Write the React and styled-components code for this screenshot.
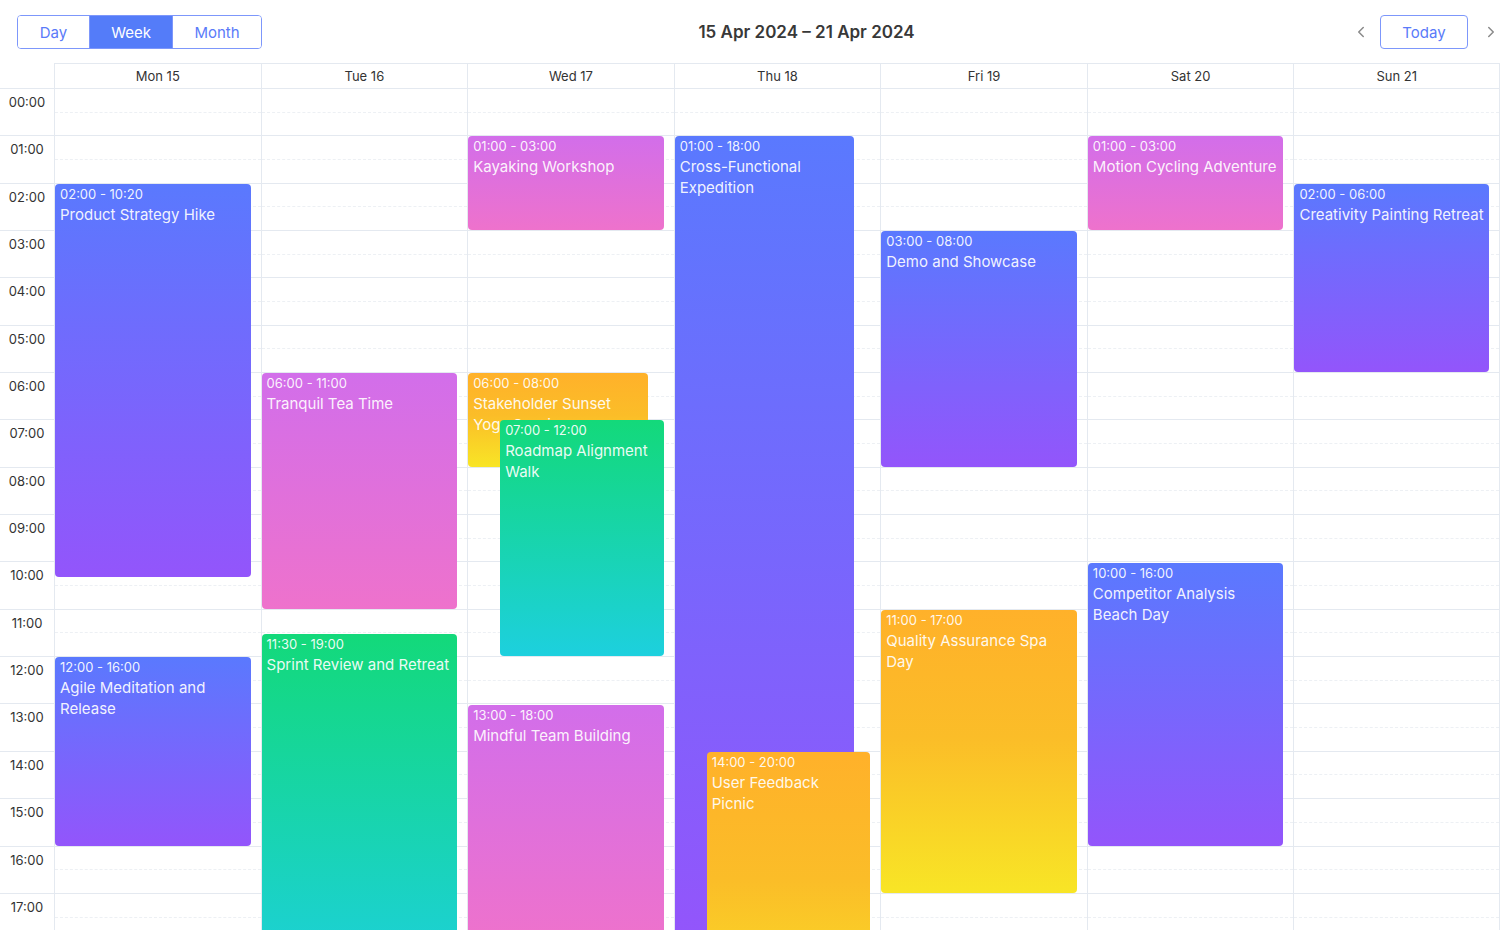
import React from 'react';
import styled, { createGlobalStyle } from 'styled-components';
import { ChevronLeft, ChevronRight } from 'lucide-react';

const HOUR = 47.35;

const GlobalStyle = createGlobalStyle`
  body {
    margin: 0;
    overflow: hidden;
    background: #fff;
    font-family: Inter, "Noto Sans", sans-serif;
    color: #333;
  }
`;

const Page = styled.div`
  width: 1512px;
  height: 930px;
  display: flex;
  flex-direction: column;
  overflow: hidden;
`;

const Toolbar = styled.div`
  height: 63px;
  box-sizing: border-box;
  padding: 15px 11px 0 17px;
  display: flex;
  align-items: flex-start;
`;

const ViewGroup = styled.div`
  display: flex;
  border: 1px solid #7d97fb;
  border-radius: 4px;
  overflow: hidden;
  height: 34px;
  box-sizing: border-box;
`;

const ViewButton = styled.button`
  border: none;
  border-left: ${p => (p.first ? 'none' : '1px solid #7d97fb')};
  background: ${p => (p.active ? '#547cf9' : '#fff')};
  color: ${p => (p.active ? '#fff' : '#5a7bf9')};
  font-family: inherit;
  font-size: 15px;
  width: ${p => p.w}px;
  padding: 0;
  cursor: pointer;
`;

const Title = styled.h2`
  flex: 1;
  margin: 0;
  line-height: 34px;
  text-align: center;
  font-size: 17px;
  font-weight: 600;
  color: #383838;
`;

const NavGroup = styled.div`
  display: flex;
  align-items: center;
  height: 34px;
`;

const IconButton = styled.button`
  border: none;
  background: none;
  padding: 0;
  width: 20px;
  display: flex;
  align-items: center;
  justify-content: center;
  color: #8a8a8a;
`;

const TodayButton = styled.button`
  height: 34px;
  width: 88px;
  box-sizing: border-box;
  border: 1px solid #7d97fb;
  border-radius: 4px;
  background: #fff;
  color: #5a7bf9;
  font-family: inherit;
  font-size: 15px;
  margin: 0 13px 0 9px;
`;

const Columns = styled.div`
  display: grid;
  grid-template-columns: 54px repeat(7, 1fr);
  width: 1500px;
`;

const HeaderRow = styled(Columns)`
  height: 26px;
  box-sizing: border-box;
  border-bottom: 1px solid #e4e9f0;
`;

const HeaderCell = styled.div`
  border-left: ${p => (p.gutter ? 'none' : '1px solid #e4e9f0')};
  border-top: ${p => (p.gutter ? 'none' : '1px solid #e4e9f0')};
  border-right: ${p => (p.last ? '1px solid #e4e9f0' : 'none')};
  font-size: 13px;
  color: #333;
  display: flex;
  align-items: center;
  justify-content: center;
`;

const Body = styled(Columns)`
  flex: 1;
  overflow: hidden;
  align-items: start;
`;

const Gutter = styled.div`
  display: flex;
  flex-direction: column;
`;

const TimeLabel = styled.div`
  height: ${HOUR}px;
  box-sizing: border-box;
  border-bottom: 1px solid #e4e9f0;
  font-size: 13px;
  color: #333;
  text-align: center;
  padding-top: 5px;
  flex-shrink: 0;
`;

const DayColumn = styled.div`
  position: relative;
  display: flex;
  flex-direction: column;
  border-left: 1px solid #e4e9f0;
  border-right: ${p => (p.last ? '1px solid #e4e9f0' : 'none')};
`;

const Slot = styled.div`
  height: ${HOUR}px;
  box-sizing: border-box;
  border-bottom: 1px solid #e4e9f0;
  flex-shrink: 0;
  display: flex;
  flex-direction: column;
  justify-content: center;
`;

const HalfLine = styled.div`
  border-top: 1px dashed #edf0f4;
`;

const gradients = {
  blue: 'linear-gradient(180deg, #5a79fe 0%, #9355fb 100%)',
  pink: 'linear-gradient(180deg, #d26eea 0%, #ee72cc 100%)',
  orange: 'linear-gradient(180deg, #ffb12a 0%, #fbbd28 45%, #f8e526 100%)',
  green: 'linear-gradient(180deg, #13d97a 0%, #1dd0de 100%)',
};

const Event = styled.div`
  position: absolute;
  left: ${p => (p.shift ? 32 : 0)}px;
  right: ${p => (p.narrow ? 26 : 10)}px;
  box-sizing: border-box;
  border-radius: 4px;
  background: ${p => gradients[p.tone]};
  color: rgba(255, 255, 255, 0.93);
  padding: 2px ${p => (p.shift ? 8 : 2)}px 3px 5px;
  overflow: hidden;
`;

const EventTime = styled.div`
  font-size: 13px;
  line-height: 17px;
`;

const EventTitle = styled.div`
  font-size: 15px;
  line-height: 21px;
  margin-top: 1px;
`;

const hours = Array.from({ length: 24 }, (_, i) => `${String(i).padStart(2, '0')}:00`);

const days = [
  {
    label: 'Mon 15',
    events: [
      { s: 2, e: 10 + 20 / 60, time: '02:00 - 10:20', title: 'Product Strategy Hike', tone: 'blue' },
      { s: 12, e: 16, time: '12:00 - 16:00', title: 'Agile Meditation and Release', tone: 'blue' },
    ],
  },
  {
    label: 'Tue 16',
    events: [
      { s: 6, e: 11, time: '06:00 - 11:00', title: 'Tranquil Tea Time', tone: 'pink' },
      { s: 11.5, e: 19, time: '11:30 - 19:00', title: 'Sprint Review and Retreat', tone: 'green' },
    ],
  },
  {
    label: 'Wed 17',
    events: [
      { s: 1, e: 3, time: '01:00 - 03:00', title: 'Kayaking Workshop', tone: 'pink' },
      { s: 6, e: 8, time: '06:00 - 08:00', title: 'Stakeholder Sunset Yoga Session', tone: 'orange', narrow: true },
      { s: 7, e: 12, time: '07:00 - 12:00', title: 'Roadmap Alignment Walk', tone: 'green', shift: true },
      { s: 13, e: 18, time: '13:00 - 18:00', title: 'Mindful Team Building', tone: 'pink' },
    ],
  },
  {
    label: 'Thu 18',
    events: [
      { s: 1, e: 18, time: '01:00 - 18:00', title: 'Cross-Functional Expedition', tone: 'blue', narrow: true },
      { s: 14, e: 20, time: '14:00 - 20:00', title: 'User Feedback Picnic', tone: 'orange', shift: true },
    ],
  },
  {
    label: 'Fri 19',
    events: [
      { s: 3, e: 8, time: '03:00 - 08:00', title: 'Demo and Showcase', tone: 'blue' },
      { s: 11, e: 17, time: '11:00 - 17:00', title: 'Quality Assurance Spa Day', tone: 'orange' },
    ],
  },
  {
    label: 'Sat 20',
    events: [
      { s: 1, e: 3, time: '01:00 - 03:00', title: 'Motion Cycling Adventure', tone: 'pink' },
      { s: 10, e: 16, time: '10:00 - 16:00', title: 'Competitor Analysis Beach Day', tone: 'blue' },
    ],
  },
  {
    label: 'Sun 21',
    events: [
      { s: 2, e: 6, time: '02:00 - 06:00', title: 'Creativity Painting Retreat', tone: 'blue' },
    ],
  },
];

export default function App() {
  return (
    <Page>
      <GlobalStyle />
      <Toolbar>
        <ViewGroup>
          <ViewButton first w={71}>Day</ViewButton>
          <ViewButton active w={83}>Week</ViewButton>
          <ViewButton w={89}>Month</ViewButton>
        </ViewGroup>
        <Title>15 Apr 2024 – 21 Apr 2024</Title>
        <NavGroup>
          <IconButton><ChevronLeft size={18} strokeWidth={2} /></IconButton>
          <TodayButton>Today</TodayButton>
          <IconButton><ChevronRight size={18} strokeWidth={2} /></IconButton>
        </NavGroup>
      </Toolbar>

      <HeaderRow>
        <HeaderCell gutter />
        {days.map((d, i) => (
          <HeaderCell key={d.label} last={i === days.length - 1}>{d.label}</HeaderCell>
        ))}
      </HeaderRow>

      <Body>
        <Gutter>
          {hours.map(h => <TimeLabel key={h}>{h}</TimeLabel>)}
        </Gutter>
        {days.map((d, i) => (
          <DayColumn key={d.label} last={i === days.length - 1}>
            {hours.map(h => (
              <Slot key={h}><HalfLine /></Slot>
            ))}
            {d.events.map(ev => (
              <Event
                key={ev.title}
                tone={ev.tone}
                narrow={ev.narrow}
                shift={ev.shift}
                style={{ top: ev.s * HOUR, height: (ev.e - ev.s) * HOUR - 1 }}
              >
                <EventTime>{ev.time}</EventTime>
                <EventTitle>{ev.title}</EventTitle>
              </Event>
            ))}
          </DayColumn>
        ))}
      </Body>
    </Page>
  );
}
